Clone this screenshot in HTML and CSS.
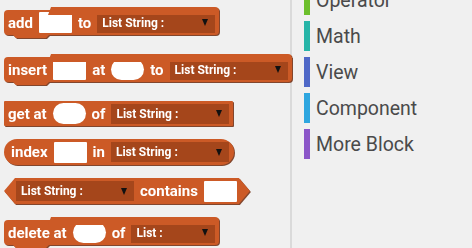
FILE: index.html
```html
<!DOCTYPE html>
<html lang="en">
<head>
    <meta charset="UTF-8">
    <meta name="viewport" content="width=device-width, initial-scale=1.0">
    <title>Blocks Palette</title>
    <link rel="stylesheet" href="styles.css">
</head>
<body>
    <div class="editor">
        <!-- Block palette -->
        <div class="palette">
            <div class="block stmt">
                <span class="label">add</span>
                <span class="input"></span>
                <span class="label">to</span>
                <span class="dd"><span>List String :</span><i class="arrow"></i></span>
            </div>
            <div class="block stmt">
                <span class="label">insert</span>
                <span class="input"></span>
                <span class="label">at</span>
                <span class="input oval"></span>
                <span class="label">to</span>
                <span class="dd"><span>List String :</span><i class="arrow"></i></span>
            </div>
            <div class="block rect">
                <span class="label">get at</span>
                <span class="input oval"></span>
                <span class="label">of</span>
                <span class="dd"><span>List String :</span><i class="arrow"></i></span>
            </div>
            <div class="block pill">
                <span class="label">index</span>
                <span class="input"></span>
                <span class="label">in</span>
                <span class="dd"><span>List String :</span><i class="arrow"></i></span>
            </div>
            <div class="block hex">
                <span class="dd"><span>List String :</span><i class="arrow"></i></span>
                <span class="label">contains</span>
                <span class="input"></span>
            </div>
            <div class="block stmt">
                <span class="label">delete at</span>
                <span class="input oval"></span>
                <span class="label">of</span>
                <span class="dd short"><span>List :</span><i class="arrow"></i></span>
            </div>
        </div>

        <div class="divider"></div>

        <!-- Categories -->
        <ul class="categories">
            <li><span class="bar operator"></span>Operator</li>
            <li><span class="bar math"></span>Math</li>
            <li><span class="bar view"></span>View</li>
            <li><span class="bar component"></span>Component</li>
            <li><span class="bar more"></span>More Block</li>
        </ul>
    </div>
</body>
</html>
```

FILE: styles.css
```css
body {
    margin: 0;
    background-color: #f0f0f0;
    font-family: Roboto, "Liberation Sans", sans-serif;
    overflow: hidden;
}
.editor {
    display: flex;
    height: 248px;
}
.palette {
    width: 286px;
    padding: 7px 0 0 4px;
    display: flex;
    flex-direction: column;
    align-items: flex-start;
    gap: 13px;
    filter: drop-shadow(1px 1px 0 rgba(110, 40, 10, 0.85));
}
.block {
    position: relative;
    display: flex;
    align-items: center;
    gap: 6px;
    height: 25px;
    padding: 0 4px 0 4px;
    background-color: #cc5a26;
    color: #fff;
}
.label {
    font-size: 15px;
    font-weight: bold;
    white-space: nowrap;
}
/* statement blocks: raised top on the right, tab at the bottom */
.stmt {
    margin-top: 3px;
    border-radius: 4px 0 4px 4px;
}
.stmt::before {
    content: "";
    position: absolute;
    top: -3px;
    left: 44px;
    right: 0;
    height: 8px;
    background-color: #cc5a26;
    border-radius: 0 4px 0 0;
    clip-path: polygon(3px 0, 100% 0, 100% 100%, 0 100%);
}
.stmt::after {
    content: "";
    position: absolute;
    top: 100%;
    left: 9px;
    width: 36px;
    height: 3px;
    background-color: #cc5a26;
    clip-path: polygon(0 0, 100% 0, calc(100% - 3px) 100%, 3px 100%);
}
.stmt + .block {
    margin-top: 6px;
}
.stmt + .stmt {
    margin-top: 9px;
}
.rect {
    border-radius: 1px;
}
.pill {
    height: 26px;
    padding: 0 5px 0 7px;
    border-radius: 13px;
}
.hex {
    height: 26px;
    padding: 0 13px 0 12px;
    clip-path: polygon(11px 0, calc(100% - 11px) 0, 100% 50%, calc(100% - 11px) 100%, 11px 100%, 0 50%);
}
.input {
    width: 33px;
    height: 21px;
    background-color: #fff;
    border-radius: 1px;
}
.input.oval {
    border-radius: 11px;
}
.dd {
    width: 118px;
    height: 20px;
    box-sizing: border-box;
    padding: 0 7px 0 5px;
    display: flex;
    align-items: center;
    justify-content: space-between;
    background-color: #a5461b;
    font-size: 12px;
    font-weight: bold;
    white-space: nowrap;
}
.dd.short {
    width: 84px;
}
.arrow {
    width: 0;
    height: 0;
    border-left: 3.5px solid transparent;
    border-right: 3.5px solid transparent;
    border-top: 7px solid #111;
}
.divider {
    width: 2px;
    background-color: #dadada;
}
.categories {
    list-style: none;
    margin: -15px 0 0 0;
    padding: 0 0 0 12px;
    display: flex;
    flex-direction: column;
    gap: 6px;
}
.categories li {
    display: flex;
    align-items: center;
    gap: 6px;
    height: 30px;
    font-size: 19.5px;
    color: #4a4a4a;
}
.bar {
    width: 6px;
    height: 30px;
}
.operator { background-color: #6cbf2c; }
.math { background-color: #27b5a8; }
.view { background-color: #4f68c7; }
.component { background-color: #2ea6df; }
.more { background-color: #8b56c8; }
```
